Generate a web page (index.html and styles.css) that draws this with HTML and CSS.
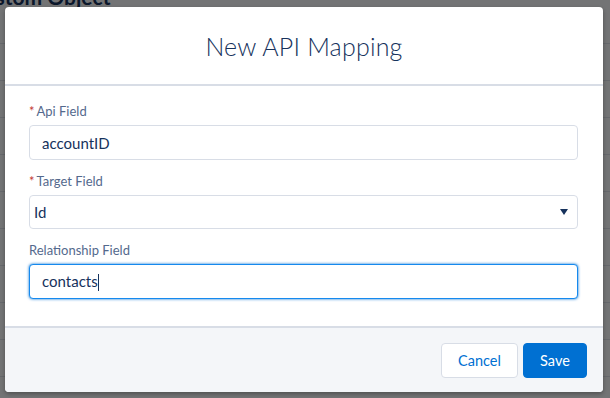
FILE: index.html
```html
<!DOCTYPE html>
<html lang="en">
<head>
    <meta charset="UTF-8">
    <title>New API Mapping</title>
    <link rel="stylesheet" href="styles.css">
</head>
<body>
    <div class="page">
        <h1 class="page-title">Custom Object</h1>
        <div class="row"></div>
        <div class="row"></div>
        <div class="row"></div>
        <div class="row"></div>
        <div class="row"></div>
        <div class="row"></div>
        <div class="row"></div>
        <div class="row"></div>
        <div class="row"></div>
        <div class="row"></div>
    </div>
    <div class="backdrop"></div>

    <div class="modal">
        <header class="modal-header">
            <h2>New API Mapping</h2>
        </header>
        <div class="modal-body">
            <div class="field">
                <label><abbr>*</abbr>Api Field</label>
                <input type="text" class="input" value="accountID">
            </div>
            <div class="field">
                <label><abbr>*</abbr>Target Field</label>
                <div class="select">
                    <span>Id</span>
                    <svg width="8" height="6" viewBox="0 0 8 6"><path d="M0 0h8L4 6z" fill="#16325c"/></svg>
                </div>
            </div>
            <div class="field">
                <label>Relationship Field</label>
                <div class="input focused">contacts<span class="caret"></span></div>
            </div>
        </div>
        <footer class="modal-footer">
            <button class="btn btn-neutral">Cancel</button>
            <button class="btn btn-brand">Save</button>
        </footer>
    </div>
</body>
</html>
```

FILE: styles.css
```css
* {
    margin: 0;
    padding: 0;
    box-sizing: border-box;
    font-family: 'Lato', 'Open Sans', sans-serif;
}

body {
    width: 610px;
    height: 398px;
    overflow: hidden;
    background: #f4f6f9;
    position: relative;
}

.page {
    margin-top: -13px;
}

.page-title {
    font-size: 21px;
    font-weight: 700;
    color: #16325c;
    height: 20px;
    line-height: 20px;
    margin-left: -30px;
}

.row {
    height: 37px;
    border-bottom: 1px solid #d8dde6;
}

.backdrop {
    position: absolute;
    inset: 0;
    background: rgba(0, 0, 0, 0.53);
}

.modal {
    position: absolute;
    left: 5px;
    top: 7px;
    width: 598px;
    height: 385px;
    background: #fff;
    border-radius: 4px;
    box-shadow: 0 2px 4px rgba(0, 0, 0, 0.3);
    display: flex;
    flex-direction: column;
    overflow: hidden;
}

.modal-header {
    height: 79px;
    border-bottom: 2px solid #d8dde6;
    display: flex;
    align-items: center;
    justify-content: center;
}

.modal-header h2 {
    font-size: 25px;
    font-weight: 300;
    color: #16325c;
    letter-spacing: 0.2px;
}

.modal-body {
    flex: 1;
    padding: 16px 25px 0 24px;
}

.field {
    margin-bottom: 12px;
}

.field label {
    display: block;
    font-size: 13px;
    color: #54698d;
    line-height: 18px;
    margin-bottom: 5px;
}

.field abbr {
    color: #c23934;
    margin-right: 2px;
    text-decoration: none;
}

.input {
    display: block;
    width: 100%;
    height: 35px;
    padding: 0 12px;
    border: 1px solid #d8dde6;
    border-radius: 4px;
    font-size: 15px;
    color: #16325c;
    line-height: 33px;
    outline: none;
    background: #fff;
}

.input.focused {
    border-color: #1589ee;
    box-shadow: 0 0 3px #0070d2;
}

.caret {
    display: inline-block;
    width: 1px;
    height: 17px;
    background: #16325c;
    vertical-align: -4px;
}

.select {
    height: 34px;
    padding: 0 9px 0 4px;
    border: 1px solid #d8dde6;
    border-radius: 4px;
    font-size: 15px;
    color: #16325c;
    display: flex;
    align-items: center;
    justify-content: space-between;
}

.modal-footer {
    height: 66px;
    border-top: 2px solid #d8dde6;
    background: #f4f6f9;
    display: flex;
    justify-content: flex-end;
    align-items: center;
    gap: 5px;
    padding: 0 16px;
}

.btn {
    height: 35px;
    border-radius: 4px;
    font-size: 14.5px;
    padding: 0 16px;
    cursor: pointer;
}

.btn-neutral {
    width: 77px;
    background: #fff;
    border: 1px solid #d8dde6;
    color: #0070d2;
}

.btn-brand {
    width: 64px;
    background: #0070d2;
    border: 1px solid #0070d2;
    color: #fff;
}
```
